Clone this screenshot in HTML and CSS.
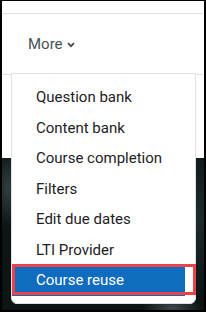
FILE: index.html
```html
<!doctype html>
<html>
<head>
	<meta charset="utf-8"/>
	<title>More menu</title>
	<link rel="stylesheet" href="styles.css">
</head>
<body>
	<div class="frame">
		<div class="topbar"></div>
		<nav class="secondary-nav">
			<span class="more-link">More
				<svg class="caret" width="8" height="6" viewBox="0 0 8 6"><path d="M1 1.2 L4 4.2 L7 1.2" fill="none" stroke="#3f464d" stroke-width="1.7"/></svg>
			</span>
		</nav>
		<div class="page-blank"></div>
		<div class="hero"></div>

		<div class="dropdown-menu">
			<a class="dropdown-item">Question bank</a>
			<a class="dropdown-item">Content bank</a>
			<a class="dropdown-item">Course completion</a>
			<a class="dropdown-item">Filters</a>
			<a class="dropdown-item">Edit due dates</a>
			<a class="dropdown-item">LTI Provider</a>
			<a class="dropdown-item active">Course reuse</a>
			<div class="highlight-box"></div>
		</div>
	</div>
</body>
</html>
```

FILE: styles.css
```css
html, body {
	margin: 0;
	padding: 0;
	background: #fff;
}
.frame {
	position: relative;
	width: 206px;
	height: 312px;
	box-sizing: border-box;
	border-top: 1px solid #000;
	border-left: 2px solid #000;
	border-right: 2px solid #000;
	border-bottom: 2px solid #000;
	overflow: hidden;
	display: flex;
	flex-direction: column;
	font-family: Roboto, "Liberation Sans", sans-serif;
}
.topbar {
	height: 12px;
	border-bottom: 1px solid #dee2e6;
	flex: none;
}
.secondary-nav {
	height: 60px;
	border-bottom: 1px solid #dee2e6;
	display: flex;
	align-items: center;
	padding-left: 26px;
	flex: none;
}
.more-link {
	font-size: 15px;
	color: #4a5056;
	display: flex;
	align-items: center;
	gap: 4px;
}
.caret {
	margin-top: 2px;
}
.page-blank {
	height: 83px;
	flex: none;
}
.hero {
	flex: 1;
	background:
		radial-gradient(ellipse 30px 12px at 170px 150px, rgba(150,170,175,0.35), transparent),
		radial-gradient(ellipse 18px 40px at 6px 30px, rgba(120,140,140,0.35), transparent),
		radial-gradient(ellipse 60px 80px at 195px 60px, rgba(40,60,60,0.6), transparent),
		#0c1414;
}

/* the open menu lies over the page */
.dropdown-menu {
	position: absolute;
	top: 72px;
	left: 9px;
	width: 183px;
	background: #fff;
	border: 1px solid #dee2e6;
	border-radius: 0 0 6px 6px;
	padding: 8px 0 7px;
}
.dropdown-item {
	display: block;
	height: 30.5px;
	line-height: 31px;
	padding-left: 24px;
	font-size: 15px;
	color: #1d2125;
}
.dropdown-item.active {
	background: #0f6cbf;
	color: #fff;
	margin-right: 10px;
}
.highlight-box {
	position: absolute;
	left: 0;
	top: 190px;
	width: 184px;
	height: 31px;
	box-sizing: border-box;
	border: 3px solid #ef4149;
}
```
